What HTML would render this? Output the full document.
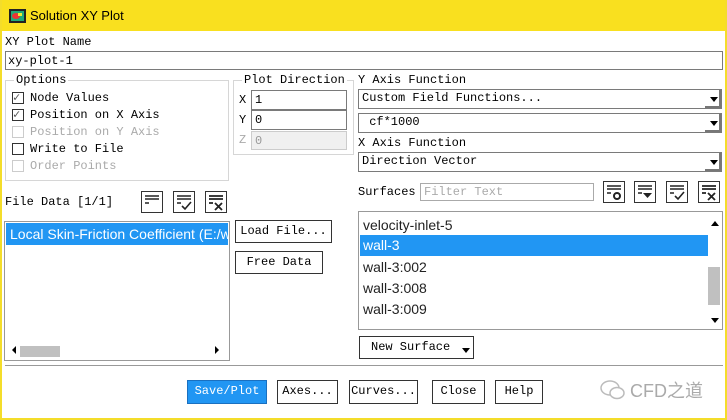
<!DOCTYPE html>
<html><head><meta charset="utf-8"><style>
*{box-sizing:border-box;margin:0;padding:0}
body{width:727px;height:420px;position:relative;background:#fff;overflow:hidden;font-family:"Liberation Mono",monospace;font-size:12px;color:#000}
.a{position:absolute;white-space:nowrap}
.frame{position:absolute;left:0;top:0;width:727px;height:420px;border:2px solid #f4dd2a;border-top:none}
.title{position:absolute;left:0;top:0;width:727px;height:31px;background:#f9e01f}
.box{position:absolute;border:1px solid #7a7a7a;background:#fff}
.grp{position:absolute;border:1px solid #d6d6d6}
.lg{position:absolute;background:#fff;padding:0 2px;line-height:13px}
.cb{position:absolute;width:12px;height:12px;border:1px solid #333;background:#fff}
.cb.d{border-color:#ccc}
.btn{position:absolute;border:1px solid #333;background:#fff;text-align:center;line-height:20px;font-family:"Liberation Mono",monospace;font-size:12px}
.dd{position:absolute;border:1px solid #7a7a7a;background:#fff;padding-left:3px;line-height:17px}
.dd:after{content:"";position:absolute;right:3px;top:7px;border:4px solid transparent;border-top:5px solid #000;border-bottom:none}
.dd i{position:absolute;right:0;top:0;width:16px;height:100%;border-right:2px solid #777;border-bottom:2px solid #777}
.ic{position:absolute;width:22px;height:22px}
.sans{font-family:"Liberation Sans",sans-serif;font-size:13px}
</style></head><body>
<div class="title"></div>
<div class="frame"></div>
<svg class="a" style="left:9px;top:9px" width="17" height="14"><rect width="17" height="14" fill="#222"/><rect x="2" y="2" width="13" height="10" fill="#2a7"/><ellipse cx="7" cy="7" rx="4" ry="3" fill="#e33"/><rect x="9" y="4" width="4" height="3" fill="#ee3"/></svg>
<div class="a sans" style="left:30px;top:8px;font-size:13px">Solution XY Plot</div>

<div class="a" style="left:5px;top:35px">XY Plot Name</div>
<div class="box" style="left:5px;top:51px;width:718px;height:19px"><span class="a" style="left:2px;top:2px">xy-plot-1</span></div>

<div class="grp" style="left:5px;top:80px;width:224px;height:101px"></div>
<div class="lg" style="left:14px;top:74px">Options</div>
<div class="cb" style="left:12px;top:92px"></div><div class="a" style="left:13px;top:90px;color:#555">✓</div><div class="a" style="left:30px;top:91px">Node Values</div>
<div class="cb" style="left:12px;top:109px"></div><div class="a" style="left:13px;top:107px;color:#555">✓</div><div class="a" style="left:30px;top:108px">Position on X Axis</div>
<div class="cb d" style="left:12px;top:126px"></div><div class="a" style="left:30px;top:125px;color:#aaa">Position on Y Axis</div>
<div class="cb" style="left:12px;top:143px"></div><div class="a" style="left:30px;top:142px">Write to File</div>
<div class="cb d" style="left:12px;top:160px"></div><div class="a" style="left:30px;top:159px;color:#aaa">Order Points</div>

<div class="grp" style="left:233px;top:80px;width:121px;height:75px"></div>
<div class="lg" style="left:242px;top:74px">Plot Direction</div>
<div class="a" style="left:239px;top:93px">X</div><div class="box" style="left:251px;top:90px;width:96px;height:20px"><span class="a" style="left:3px;top:2px">1</span></div>
<div class="a" style="left:239px;top:113px">Y</div><div class="box" style="left:251px;top:110px;width:96px;height:20px"><span class="a" style="left:3px;top:2px">0</span></div>
<div class="a" style="left:239px;top:133px;color:#aaa">Z</div><div class="box" style="left:251px;top:131px;width:96px;height:19px;background:#f0f0f0;border-color:#ccc"><span class="a" style="left:3px;top:2px;color:#999">0</span></div>

<div class="a" style="left:358px;top:73px">Y Axis Function</div>
<div class="dd" style="left:358px;top:89px;width:364px;height:20px">Custom Field Functions...<i></i></div>
<div class="dd" style="left:358px;top:113px;width:364px;height:20px">&nbsp;cf*1000<i></i></div>
<div class="a" style="left:358px;top:136px">X Axis Function</div>
<div class="dd" style="left:358px;top:152px;width:364px;height:20px">Direction Vector<i></i></div>

<div class="a" style="left:358px;top:185px">Surfaces</div>
<div class="box" style="left:420px;top:183px;width:174px;height:18px;border-color:#aaa"><span class="a" style="left:3px;top:1px;color:#aaa">Filter Text</span></div>

<div class="a" style="left:5px;top:195px">File Data [1/1]</div>

<!-- icons -->
<svg class="ic" style="left:141px;top:191px" viewBox="0 0 22 22"><rect x=".5" y=".5" width="21" height="21" fill="#fff" stroke="#333"/><path d="M4 5h14M4 8h14M4 12h4" stroke="#222" stroke-width="1.5"/></svg>
<svg class="ic" style="left:173px;top:191px" viewBox="0 0 22 22"><rect x=".5" y=".5" width="21" height="21" fill="#fff" stroke="#333"/><path d="M4 5h14M4 8h14M4 12h4M9 15l3 3 6-7" stroke="#222" stroke-width="1.6" fill="none"/></svg>
<svg class="ic" style="left:205px;top:191px" viewBox="0 0 22 22"><rect x=".5" y=".5" width="21" height="21" fill="#fff" stroke="#333"/><path d="M4 5h14M4 8h14M4 12h4M10 12l7 7M17 12l-7 7" stroke="#222" stroke-width="1.8" fill="none"/></svg>

<svg class="ic" style="left:603px;top:181px" viewBox="0 0 22 22"><rect x=".5" y=".5" width="21" height="21" fill="#fff" stroke="#333"/><path d="M4 5h14M4 8h14M4 12h4" stroke="#222" stroke-width="1.5"/><circle cx="14" cy="15" r="3" fill="none" stroke="#222" stroke-width="2"/></svg>
<svg class="ic" style="left:634px;top:181px" viewBox="0 0 22 22"><rect x=".5" y=".5" width="21" height="21" fill="#fff" stroke="#333"/><path d="M4 5h14M4 8h14M4 12h4" stroke="#222" stroke-width="1.5"/><path d="M9 12h9l-4.5 5z" fill="#222"/></svg>
<svg class="ic" style="left:666px;top:181px" viewBox="0 0 22 22"><rect x=".5" y=".5" width="21" height="21" fill="#fff" stroke="#333"/><path d="M4 5h14M4 8h14M4 12h4M9 15l3 3 6-7" stroke="#222" stroke-width="1.6" fill="none"/></svg>
<svg class="ic" style="left:698px;top:181px" viewBox="0 0 22 22"><rect x=".5" y=".5" width="21" height="21" fill="#fff" stroke="#333"/><path d="M4 5h14M4 8h14M4 12h4M10 12l7 7M17 12l-7 7" stroke="#222" stroke-width="1.8" fill="none"/></svg>

<!-- file list -->
<div class="box" style="left:4px;top:221px;width:226px;height:140px;overflow:hidden;border-color:#999">
 <div class="a sans" style="left:1px;top:1px;width:222px;height:22px;background:#2196f3;color:#fff;line-height:22px;padding-left:4px;font-size:14px">Local Skin-Friction Coefficient (E:/w</div>
 <div class="a" style="left:7px;top:124px;border:4px solid transparent;border-right:4px solid #000;border-left:none"></div>
 <div class="a" style="left:15px;top:124px;width:40px;height:11px;background:#c0c0c0"></div>
 <div class="a" style="left:210px;top:124px;border:4px solid transparent;border-left:4px solid #000;border-right:none"></div>
</div>
<div class="btn" style="left:235px;top:220px;width:97px;height:23px">Load File...</div>
<div class="btn" style="left:235px;top:251px;width:88px;height:23px">Free Data</div>

<!-- surfaces list -->
<div class="box" style="left:358px;top:211px;width:365px;height:119px;overflow:hidden;border-color:#999">
 <div class="a sans" style="left:4px;top:3px;line-height:21px;font-size:14px;color:#222">velocity-inlet-5</div>
 <div class="a sans" style="left:1px;top:23px;width:348px;height:21px;background:#2196f3;color:#fff;line-height:21px;padding-left:3px;font-size:14px">wall-3</div>
 <div class="a sans" style="left:4px;top:45px;line-height:21px;font-size:14px;color:#222">wall-3:002</div>
 <div class="a sans" style="left:4px;top:66px;line-height:21px;font-size:14px;color:#222">wall-3:008</div>
 <div class="a sans" style="left:4px;top:87px;line-height:21px;font-size:14px;color:#222">wall-3:009</div>
 <div class="a" style="left:352px;top:9px;border:4px solid transparent;border-bottom:5px solid #000;border-top:none"></div>
 <div class="a" style="left:349px;top:55px;width:12px;height:38px;background:#c0c0c0"></div>
 <div class="a" style="left:352px;top:106px;border:4px solid transparent;border-top:5px solid #000;border-bottom:none"></div>
</div>
<div class="btn" style="left:359px;top:336px;width:115px;height:23px;text-align:left;padding-left:11px">New Surface<span class="a" style="left:102px;top:11px;border:4px solid transparent;border-top:5px solid #000;border-bottom:none"></span></div>

<div class="a" style="left:5px;top:365px;width:718px;height:1px;background:#999"></div>

<div class="btn" style="left:187px;top:380px;width:80px;height:24px;background:#2196f3;color:#fff;border-color:#1a70c0">Save/Plot</div>
<div class="btn" style="left:277px;top:380px;width:61px;height:24px">Axes...</div>
<div class="btn" style="left:349px;top:380px;width:69px;height:24px">Curves...</div>
<div class="btn" style="left:432px;top:380px;width:53px;height:24px">Close</div>
<div class="btn" style="left:495px;top:380px;width:48px;height:24px">Help</div>

<svg class="a" style="left:599px;top:378px" width="28" height="24"><ellipse cx="11" cy="10" rx="9" ry="7" fill="none" stroke="#bbb" stroke-width="1.5"/><ellipse cx="18" cy="15" rx="7" ry="5.5" fill="#fff" stroke="#bbb" stroke-width="1.5"/></svg>
<div class="a" style="left:630px;top:377px;font-family:'Liberation Sans','Noto Sans CJK SC',sans-serif;font-size:18px;color:#aaa">CFD之道</div>
</body></html>
